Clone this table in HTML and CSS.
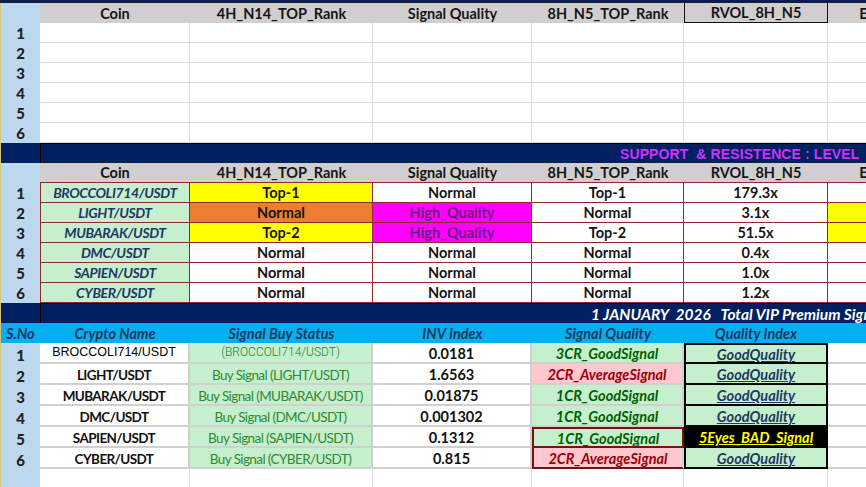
FILE: index.html
```
<!DOCTYPE html>
<html>
<head>
<meta charset="utf-8">
<link rel="stylesheet" href="styles.css">
</head>
<body>
<div class="sheet">
  <div class="strip"></div>

  <div class="grid s1">
    <div class="c gut hd"></div>
    <div class="c hd">Coin</div>
    <div class="c hd">4H_N14_TOP_Rank</div>
    <div class="c hd">Signal Quality</div>
    <div class="c hd">8H_N5_TOP_Rank</div>
    <div class="c hd sel">RVOL_8H_N5</div>
    <div class="c hd">EMA_Trend</div>

    <div class="c gut">1</div><div class="c e"></div><div class="c e"></div><div class="c e"></div><div class="c e"></div><div class="c e"></div><div class="c e"></div>
    <div class="c gut">2</div><div class="c e"></div><div class="c e"></div><div class="c e"></div><div class="c e"></div><div class="c e"></div><div class="c e"></div>
    <div class="c gut">3</div><div class="c e"></div><div class="c e"></div><div class="c e"></div><div class="c e"></div><div class="c e"></div><div class="c e"></div>
    <div class="c gut">4</div><div class="c e"></div><div class="c e"></div><div class="c e"></div><div class="c e"></div><div class="c e"></div><div class="c e"></div>
    <div class="c gut">5</div><div class="c e"></div><div class="c e"></div><div class="c e"></div><div class="c e"></div><div class="c e"></div><div class="c e"></div>
    <div class="c gut">6</div><div class="c e"></div><div class="c e"></div><div class="c e"></div><div class="c e"></div><div class="c e"></div><div class="c e"></div>
  </div>

  <div class="grid band">
    <div class="band-gut"></div>
    <div class="band-main"><span class="sr-title">SUPPORT  &amp; RESISTENCE : LEVEL</span></div>
  </div>

  <div class="grid s2">
    <div class="c gut hd"></div>
    <div class="c hd">Coin</div>
    <div class="c hd">4H_N14_TOP_Rank</div>
    <div class="c hd">Signal Quality</div>
    <div class="c hd">8H_N5_TOP_Rank</div>
    <div class="c hd">RVOL_8H_N5</div>
    <div class="c hd">EMA_Trend</div>

    <div class="c gut">1</div><div class="c r coin">BROCCOLI714/USDT</div><div class="c r yel">Top-1</div><div class="c r">Normal</div><div class="c r">Top-1</div><div class="c r">179.3x</div><div class="c r"></div>
    <div class="c gut">2</div><div class="c r coin">LIGHT/USDT</div><div class="c r org">Normal</div><div class="c r mag">High_Quality</div><div class="c r">Normal</div><div class="c r">3.1x</div><div class="c r yel"></div>
    <div class="c gut">3</div><div class="c r coin">MUBARAK/USDT</div><div class="c r yel">Top-2</div><div class="c r mag">High_Quality</div><div class="c r">Top-2</div><div class="c r">51.5x</div><div class="c r yel"></div>
    <div class="c gut">4</div><div class="c r coin">DMC/USDT</div><div class="c r">Normal</div><div class="c r">Normal</div><div class="c r">Normal</div><div class="c r">0.4x</div><div class="c r"></div>
    <div class="c gut">5</div><div class="c r coin">SAPIEN/USDT</div><div class="c r">Normal</div><div class="c r">Normal</div><div class="c r">Normal</div><div class="c r">1.0x</div><div class="c r"></div>
    <div class="c gut">6</div><div class="c r coin">CYBER/USDT</div><div class="c r">Normal</div><div class="c r">Normal</div><div class="c r">Normal</div><div class="c r">1.2x</div><div class="c r"></div>
  </div>

  <div class="grid band">
    <div class="band-gut"></div>
    <div class="band-main"><span class="date-title">1 JANUARY  2026   Total VIP Premium Signals</span></div>
  </div>

  <div class="grid s3">
    <div class="c h3 sno">S.No</div>
    <div class="c h3">Crypto Name</div>
    <div class="c h3">Signal Buy Status</div>
    <div class="c h3">INV  Index</div>
    <div class="c h3">Signal Quality</div>
    <div class="c h3">Quality Index</div>
    <div class="c h3"></div>

    <div class="c gut row3">1</div><div class="c t name raw">BROCCOLI714/USDT</div><div class="c t buy thin">(BROCCOLI714/USDT)</div><div class="c t num">0.0181</div><div class="c t good">3CR_GoodSignal</div><div class="c t qi first">GoodQuality</div><div class="c t"></div>
    <div class="c gut row3">2</div><div class="c t name">LIGHT/USDT</div><div class="c t buy">Buy Signal (LIGHT/USDT)</div><div class="c t num">1.6563</div><div class="c t avg">2CR_AverageSignal</div><div class="c t qi">GoodQuality</div><div class="c t"></div>
    <div class="c gut row3">3</div><div class="c t name">MUBARAK/USDT</div><div class="c t buy">Buy Signal (MUBARAK/USDT)</div><div class="c t num">0.01875</div><div class="c t good">1CR_GoodSignal</div><div class="c t qi">GoodQuality</div><div class="c t"></div>
    <div class="c gut row3">4</div><div class="c t name">DMC/USDT</div><div class="c t buy">Buy Signal (DMC/USDT)</div><div class="c t num">0.001302</div><div class="c t good">1CR_GoodSignal</div><div class="c t qi">GoodQuality</div><div class="c t"></div>
    <div class="c gut row3">5</div><div class="c t name">SAPIEN/USDT</div><div class="c t buy">Buy Signal (SAPIEN/USDT)</div><div class="c t num">0.1312</div><div class="c t good boxed">1CR_GoodSignal</div><div class="c t qi bad">5Eyes_BAD_Signal</div><div class="c t"></div>
    <div class="c gut row3">6</div><div class="c t name">CYBER/USDT</div><div class="c t buy">Buy Signal (CYBER/USDT)</div><div class="c t num">0.815</div><div class="c t avg lastbox">2CR_AverageSignal</div><div class="c t qi">GoodQuality</div><div class="c t"></div>

    <div class="c gut tall"></div><div class="c f"></div><div class="c f"></div><div class="c f"></div><div class="c f"></div><div class="c f"></div><div class="c f"></div>
  </div>
</div>
</body>
</html>
```
FILE: styles.css
```
* { box-sizing: border-box; margin: 0; padding: 0; }
html, body { width: 866px; height: 487px; overflow: hidden; background: #ffffff; }
body { font-family: Lato, "Open Sans", sans-serif; font-size: 14.5px; color: #161616; }

.sheet { width: 966px; }
.strip { height: 3px; background: #0e1c4a; }

.grid { display: grid; grid-template-columns: 40px 150px 183px 159px 152px 144px 138px; }
.c { display: flex; align-items: center; justify-content: center; white-space: nowrap; overflow: hidden; height: 20px; }

.gut { background: #bdd7ee; border-left: 1px solid #d8c67c; font-weight: 900; font-size: 15px; color: #222; }
.hd { background: #d0cece; font-weight: 700; }
.gut.hd { background: #bdd7ee; }
.sel { border: 1px solid #111; border-top: none; }

.e { background: #fff; border-right: 1px solid #dadada; border-bottom: 1px solid #dadada; }

.band { height: 20px; background: #002060; }
.band-gut { background: #002060; border-left: 1px solid #d8c67c; }
.band-main { grid-column: 2 / -1; border-left: 1px solid #000; border-top: 1px solid #000; display: flex; align-items: center; overflow: hidden; white-space: pre; }
.sr-title { padding-left: 579px; font-family: "Liberation Sans", Arial, sans-serif; font-weight: 700; font-size: 14px; color: #cc33ff; letter-spacing: 0.1px; }
.date-title { padding-left: 550px; font-weight: 700; font-style: italic; font-size: 15.5px; color: #ffffff; }

.r { border-right: 1px solid #8e2a2a; border-bottom: 1px solid #8e2a2a; font-weight: 700; background: #fff; }
.s2 .c.r:nth-child(7n+2) { border-left: 1px solid #8e2a2a; }
.s2 .hd { border-bottom: 1px solid #8e2a2a; }
.s2 .gut.hd { border-bottom: none; }
.coin { background: #c6efce; color: #1f3864; font-style: italic; font-size: 14px; letter-spacing: -0.4px; }
.yel { background: #ffff00; }
.org { background: #ed7d31; }
.mag { background: #ff00ff; color: #6b1d7a; }

.h3 { background: #00b0f0; color: #1f3864; font-weight: 700; font-style: italic; }
.sno { justify-content: flex-start; padding-left: 5px; border-left: 1px solid #d8c67c; }

.t { height: 21px; padding-top: 2px; border-right: 2px solid #d0d0d0; border-bottom: 2px solid #d0d0d0; background: #fff; }
.gut.row3 { height: 21px; padding-top: 2px; }
.name { font-weight: 700; color: #111; font-size: 13.5px; letter-spacing: -0.6px; }
.raw { font-family: "Liberation Sans", Arial, sans-serif; font-weight: 400; font-size: 12.5px; letter-spacing: 0; align-items: flex-start; padding-top: 2px; color: #000; }
.buy { background: #c6efce; color: #2f8a2f; font-size: 13.5px; letter-spacing: -0.6px; }
.thin { font-family: Roboto, sans-serif; font-weight: 300; font-size: 12px; letter-spacing: 0; align-items: flex-start; padding-top: 2px; color: #2e7d32; }
.num { font-weight: 700; color: #111; }
.good { background: #c6efce; color: #006100; font-weight: 700; font-style: italic; }
.avg { background: #ffc7ce; color: #9c0006; font-weight: 700; font-style: italic; }
.boxed { border: 2px solid #7a1010; }
.lastbox { border-left: 2px solid #7a1010; border-bottom: 2px solid #7a1010; }
.qi { background: #c6efce; color: #1f3864; font-weight: 700; font-style: italic; text-decoration: underline; border-left: 2px solid #000; border-right: 2px solid #000; border-bottom: 2px solid #000; }
.qi.first { border-top: 2px solid #000; }
.bad { background: #000; color: #ffff00; }

.f { height: 18px; border-right: 1px solid #dadada; background: #fff; }
.gut.tall { height: 18px; }
```
